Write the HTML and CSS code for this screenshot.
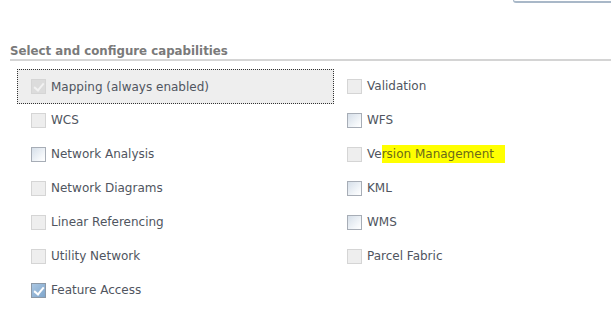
FILE: index.html
```html
<!DOCTYPE html>
<html lang="en">
<head>
    <meta charset="UTF-8">
    <title>Capabilities</title>
    <link rel="stylesheet" href="styles.css">
</head>
<body>
    <div class="toolbar">
        <div class="toolbar-btn"></div>
    </div>

    <section class="capabilities">
        <h2 class="section-title">Select and configure capabilities</h2>

        <div class="cap-columns">
            <ul class="cap-list cap-list-left">
                <li class="cap-item cap-focus">
                    <span class="cb cb-disabled cb-checked"></span>
                    <span class="cap-label">Mapping (always enabled)</span>
                </li>
                <li class="cap-item">
                    <span class="cb cb-disabled"></span>
                    <span class="cap-label">WCS</span>
                </li>
                <li class="cap-item">
                    <span class="cb"></span>
                    <span class="cap-label">Network Analysis</span>
                </li>
                <li class="cap-item">
                    <span class="cb cb-disabled"></span>
                    <span class="cap-label">Network Diagrams</span>
                </li>
                <li class="cap-item">
                    <span class="cb cb-disabled"></span>
                    <span class="cap-label">Linear Referencing</span>
                </li>
                <li class="cap-item">
                    <span class="cb cb-disabled"></span>
                    <span class="cap-label">Utility Network</span>
                </li>
                <li class="cap-item">
                    <span class="cb cb-checked"></span>
                    <span class="cap-label">Feature Access</span>
                </li>
            </ul>

            <ul class="cap-list cap-list-right">
                <li class="cap-item">
                    <span class="cb cb-disabled"></span>
                    <span class="cap-label">Validation</span>
                </li>
                <li class="cap-item">
                    <span class="cb"></span>
                    <span class="cap-label">WFS</span>
                </li>
                <li class="cap-item">
                    <span class="cb cb-disabled"></span>
                    <span class="cap-label">Ve<mark class="hl">rsion Management</mark></span>
                </li>
                <li class="cap-item">
                    <span class="cb"></span>
                    <span class="cap-label">KML</span>
                </li>
                <li class="cap-item">
                    <span class="cb"></span>
                    <span class="cap-label">WMS</span>
                </li>
                <li class="cap-item">
                    <span class="cb cb-disabled"></span>
                    <span class="cap-label">Parcel Fabric</span>
                </li>
            </ul>
        </div>
    </section>
</body>
</html>
```

FILE: styles.css
```css
* {
    margin: 0;
    padding: 0;
    box-sizing: border-box;
}

body {
    font-family: "DejaVu Sans", Verdana, sans-serif;
    background: #fff;
    color: #555;
    width: 611px;
    height: 335px;
    overflow: hidden;
}

/* stub of a button cut off at the top edge */
.toolbar {
    display: flex;
    justify-content: flex-end;
    height: 3px;
}

.toolbar-btn {
    width: 98px;
    height: 3px;
    border-left: 1px solid #a9b8c8;
    border-bottom: 2px solid #a9b8c8;
    border-bottom-left-radius: 3px;
}

.capabilities {
    padding: 40px 0 0 10px;
}

.section-title {
    font-size: 11.8px;
    font-weight: bold;
    color: #7a7a7a;
    line-height: 16px;
    padding-bottom: 0;
    border-bottom: 2px solid #d4d4d4;
}

.cap-columns {
    display: flex;
    padding: 8px 0 0 7px;
}

.cap-list {
    list-style: none;
}

.cap-list-left {
    width: 317px;
}

.cap-list-right {
    flex: 1;
}

.cap-item {
    display: flex;
    align-items: center;
    gap: 5px;
    height: 34px;
    padding-left: 14px;
    font-size: 12px;
}

.cap-list-right .cap-item {
    padding-left: 13px;
}

.cap-focus {
    background: #eeeeee;
    outline: 1px dotted #333;
    outline-offset: -1px;
    height: 35px;
    margin-bottom: -1px;
}

.cap-label {
    color: #505560;
    white-space: nowrap;
}

.hl {
    background: #ffff00;
    color: #6b6a1a;
    padding: 2px 11px 2px 0;
}

/* checkboxes */
.cb {
    position: relative;
    flex: none;
    width: 15px;
    height: 15px;
    border: 1px solid #a7adb6;
    background: linear-gradient(135deg, #d6dfe9 0%, #f4f7fa 70%, #fff 100%);
}

.cb-disabled {
    border-color: #d5d5d5;
    background: #eeeeee;
}

.cb-checked::after {
    content: "";
    position: absolute;
    left: 4px;
    top: 1px;
    width: 4px;
    height: 8px;
    border: solid #fff;
    border-width: 0 2px 2px 0;
    transform: rotate(40deg);
}

.cb-checked:not(.cb-disabled) {
    border-color: #8c98a6;
    background: linear-gradient(135deg, #a9c6e2 0%, #7fa6cc 100%);
}

.cb-disabled.cb-checked {
    background: #dcdcdc;
}

.cb-disabled.cb-checked::after {
    border-color: #f2f2f2;
}
```
